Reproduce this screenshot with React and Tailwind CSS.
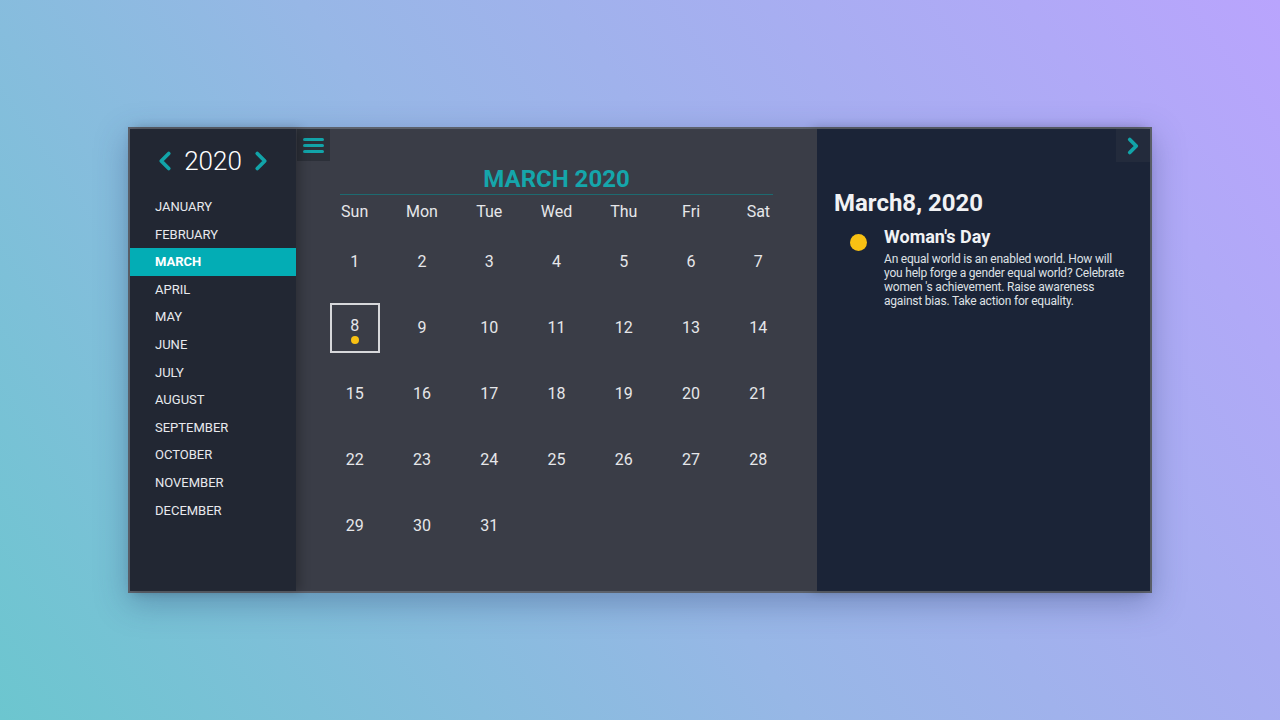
import { ChevronLeft, ChevronRight } from "lucide-react";

const months = [
  "JANUARY",
  "FEBRUARY",
  "MARCH",
  "APRIL",
  "MAY",
  "JUNE",
  "JULY",
  "AUGUST",
  "SEPTEMBER",
  "OCTOBER",
  "NOVEMBER",
  "DECEMBER",
];

const weekDays = ["Sun", "Mon", "Tue", "Wed", "Thu", "Fri", "Sat"];

function App() {
  const days = [];
  for (let i = 1; i <= 31; i++) days.push(i);

  return (
    <div
      className="flex h-[720px] w-full items-center justify-center bg-[linear-gradient(55deg,#6cc6cf_0%,#97b7e6_45%,#b9a4fd_100%)]"
      style={{ fontFamily: "Roboto, 'Liberation Sans', sans-serif" }}
    >
      <div className="flex h-[466px] w-[1024px] border-2 border-[#5c616b] shadow-[0_10px_30px_rgba(40,60,110,0.35)]">
        {/* sidebar */}
        <div className="relative z-20 flex w-[166px] flex-col bg-[#222733] shadow-[4px_0_10px_rgba(0,0,0,0.25)]">
          <div className="mt-[17px] flex h-[30px] items-center justify-center gap-[4px]">
            <ChevronLeft className="text-[#12a4a9]" size={30} strokeWidth={3} />
            <span className="text-[26px] font-light leading-none text-white">2020</span>
            <ChevronRight className="text-[#12a4a9]" size={30} strokeWidth={3} />
          </div>
          <ul className="mt-[17px]">
            {months.map((m) => (
              <li
                key={m}
                className={
                  m === "MARCH"
                    ? "flex h-[27.6px] items-center bg-[#03adb5] pl-[25px] text-[13px] font-bold text-white"
                    : "flex h-[27.6px] items-center pl-[25px] text-[13px] text-[#e8eaee]"
                }
              >
                {m}
              </li>
            ))}
          </ul>
        </div>

        {/* calendar */}
        <div className="relative z-10 flex w-[521px] flex-col bg-[#3a3d47] px-[25px]">
          <button className="absolute left-[1px] top-0 flex h-[32px] w-[33px] flex-col items-center justify-center gap-[3px] bg-[#2c3039]">
            <span className="h-[3px] w-[21px] rounded-sm bg-[#12a4a9]" />
            <span className="h-[3px] w-[21px] rounded-sm bg-[#12a4a9]" />
            <span className="h-[3px] w-[21px] rounded-sm bg-[#12a4a9]" />
          </button>
          <div className="mx-[19px] mt-[35px] border-b border-[#1d6a70] text-center text-[24px] font-bold leading-[30px] text-[#15a6ab]">
            MARCH 2020
          </div>
          <div className="grid grid-cols-7">
            {weekDays.map((d) => (
              <div key={d} className="flex h-[34px] items-center justify-center text-[16px] text-[#e6e7ea]">
                {d}
              </div>
            ))}
            {days.map((d) => (
              <div key={d} className="flex h-[66px] items-center justify-center">
                {d === 8 ? (
                  <div className="flex h-[50px] w-[50px] flex-col items-center justify-center border-2 border-[#d7d8db]">
                    <span className="mt-[4px] text-[16px] leading-[20px] text-[#e6e7ea]">8</span>
                    <span className="h-[8px] w-[8px] rounded-full bg-[#f8c113]" />
                  </div>
                ) : (
                  <span className="text-[16px] text-[#e6e7ea]">{d}</span>
                )}
              </div>
            ))}
          </div>
        </div>

        {/* events */}
        <div className="relative flex flex-1 flex-col bg-[#1b2437] pl-[17px] shadow-[-4px_0_10px_rgba(0,0,0,0.25)]">
          <button className="absolute right-0 top-0 flex h-[33px] w-[34px] items-center justify-center bg-[#232b3c]">
            <ChevronRight className="text-[#12a4a9]" size={26} strokeWidth={3.5} />
          </button>
          <h2 className="mt-[59px] text-[24px] font-bold leading-[30px] text-[#f1f2f4]">March8, 2020</h2>
          <div className="mt-[8px] flex">
            <span className="ml-[16px] mt-[8px] h-[17px] w-[17px] shrink-0 rounded-full bg-[#f8c113]" />
            <div className="ml-[17px]">
              <h3 className="text-[18px] font-bold leading-[22px] text-[#f1f2f4]">Woman's Day</h3>
              <p className="mt-[4px] whitespace-nowrap text-[12px] leading-[14px] tracking-[-0.2px] text-[#dfe1e5]">
                An equal world is an enabled world. How will
                <br />
                you help forge a gender equal world? Celebrate
                <br />
                women 's achievement. Raise awareness
                <br />
                against bias. Take action for equality.
              </p>
            </div>
          </div>
        </div>
      </div>
    </div>
  );
}

export default App;
